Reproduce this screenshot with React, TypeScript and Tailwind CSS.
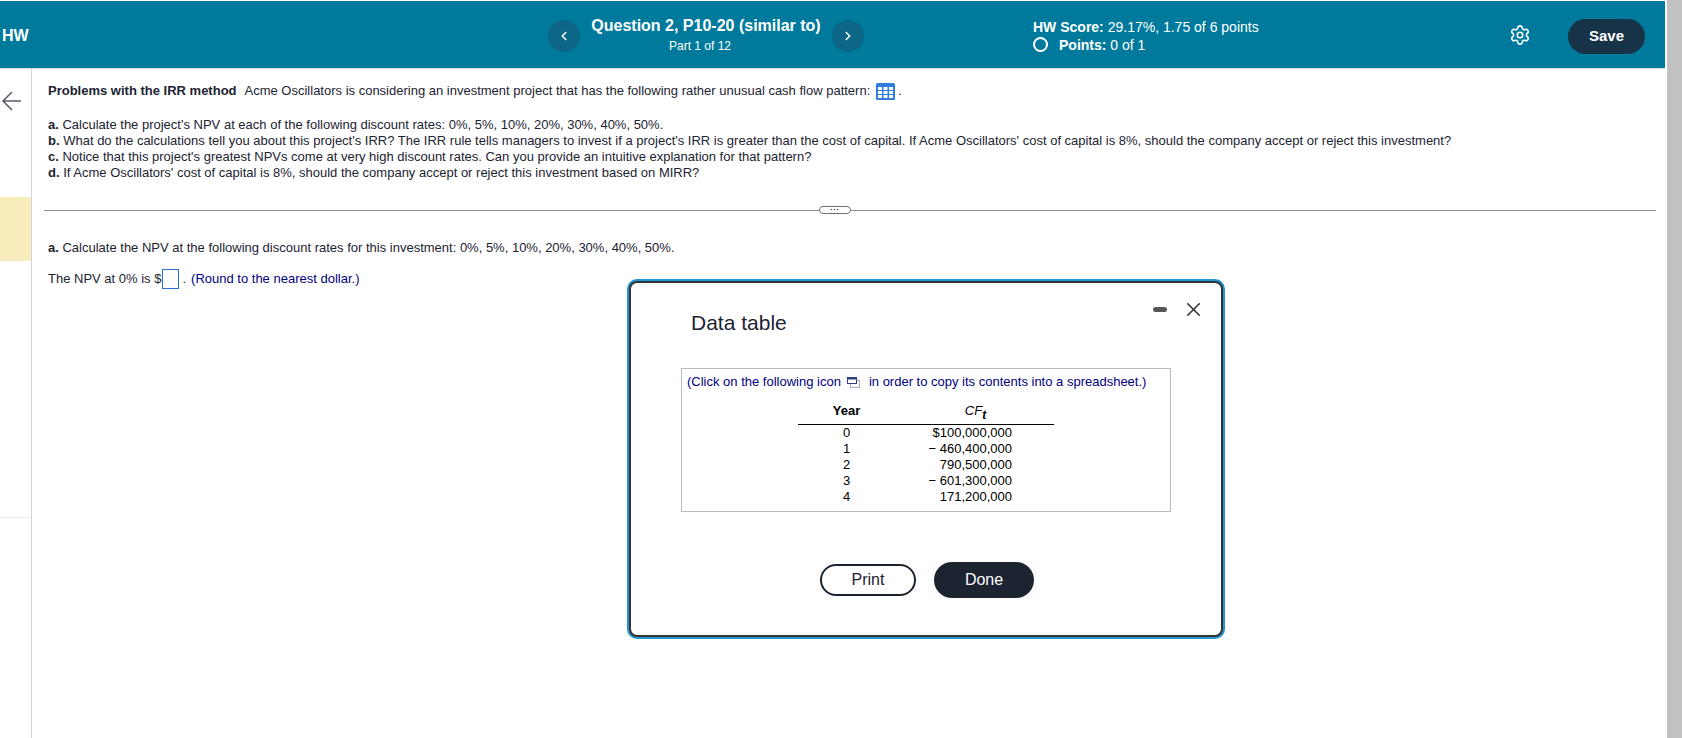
import { ChevronLeft, ChevronRight, Settings, X } from 'lucide-react'

const rows = [
  ['0', '$100,000,000'],
  ['1', '− 460,400,000'],
  ['2', '790,500,000'],
  ['3', '− 601,300,000'],
  ['4', '171,200,000'],
]

function TableIcon() {
  return (
    <svg width="19" height="17" viewBox="0 0 19 17" className="inline-block">
      <rect width="19" height="17" rx="1.500" fill="#2f7de1" />
      <g fill="white">
        <rect x="2" y="4" width="4" height="3" />
        <rect x="7.500" y="4" width="4" height="3" />
        <rect x="13" y="4" width="4" height="3" />
        <rect x="2" y="8" width="4" height="3" />
        <rect x="7.500" y="8" width="4" height="3" />
        <rect x="13" y="8" width="4" height="3" />
        <rect x="2" y="12" width="4" height="3" />
        <rect x="7.500" y="12" width="4" height="3" />
        <rect x="13" y="12" width="4" height="3" />
      </g>
    </svg>
  )
}

function CopyIcon() {
  return (
    <svg width="13" height="11" viewBox="0 0 13 11" className="inline-block">
      <rect x="3.500" y="3.500" width="9" height="7" fill="none" stroke="#a9acd6" />
      <rect x="0.500" y="0.500" width="9" height="6" fill="white" stroke="#2f3f7f" />
      <rect x="0.500" y="0.500" width="9" height="2" fill="#2f3f7f" />
    </svg>
  )
}

function DataTableDialog() {
  return (
    <div className="absolute left-[629px] top-[281px] flex h-[356px] w-[594px] flex-col rounded-lg border-2 border-[#333333] bg-white shadow-[0_0_0_2px_#2196d3]">
      <div className="flex h-[85px] items-start justify-between pl-[60px] pr-[16px]">
        <h2 className="pt-[26px] text-[21px] leading-[28px] text-[#1c2331]">Data table</h2>
        <div className="flex items-center gap-[15px] pt-[15px]">
          <div className="h-[5px] w-[14px] rounded-sm bg-[#555555]" />
          <X size={23} strokeWidth={1.6} className="text-[#333333]" />
        </div>
      </div>
      <div className="mx-[50px] h-[144px] w-[490px] border border-[#bbbbbb] pl-[5px] pt-[5px]">
        <p className="flex items-center text-[13px] leading-[16px] text-[#000080]">
          (Click on the following icon
          <span className="ml-[6px] mr-[9px] flex">
            <CopyIcon />
          </span>
          in order to copy its contents into a spreadsheet.)
        </p>
        <div className="ml-[111px] mt-[13px] w-[256px] text-[13px] text-black">
          <div className="flex h-[22px] items-start border-b border-black pb-[2px] leading-[16px]">
            <span className="w-[97px] text-center font-bold">Year</span>
            <span className="w-[117px] pl-[44px] text-center italic">
              CF<span className="relative top-[4px] text-[12px] font-bold">t</span>
            </span>
          </div>
          {rows.map(([year, amount]) => (
            <div key={year} className="flex h-[16px] items-center leading-[16px]">
              <span className="w-[97px] text-center">{year}</span>
              <span className="w-[117px] text-right">{amount}</span>
            </div>
          ))}
        </div>
      </div>
      <div className="mt-[50px] flex items-center pl-[189px]">
        <button className="h-[32px] w-[96px] rounded-full border-2 border-[#1c2331] text-[16px] text-[#1c2331]">Print</button>
        <button className="ml-[18px] h-[36px] w-[100px] rounded-full bg-[#1c2331] text-[16px] text-white">Done</button>
      </div>
    </div>
  )
}

export default function App() {
  return (
    <div className="relative flex h-[738px] w-[1682px] overflow-hidden bg-white font-['Liberation_Sans',Arial,sans-serif] text-[13px] text-[#1c2331]">
      <div className="flex w-[1665px] flex-col">
        <header className="mt-px flex h-[67px] items-center bg-[#007a9c] text-white">
          <div className="mt-[3px] w-[548px] pl-[2px] text-[16px] font-bold">HW</div>
          <button className="mt-[3px] flex h-[32px] w-[32px] items-center justify-center rounded-full bg-[#0b6785]">
            <ChevronLeft size={14} strokeWidth={2.500} />
          </button>
          <div className="ml-[11px] w-[230px] text-center">
            <div className="text-[16px] font-bold leading-[20px]">Question 2, P10-20 (similar to)</div>
            <div className="mt-[2px] pr-[12px] text-[12px] leading-[16px]">Part 1 of 12</div>
          </div>
          <button className="ml-[11px] mt-[3px] flex h-[32px] w-[32px] items-center justify-center rounded-full bg-[#0b6785]">
            <ChevronRight size={14} strokeWidth={2.500} />
          </button>
          <div className="ml-[169px] mt-[2px] w-[450px] text-[14px] leading-[18px]">
            <div>
              <b>HW Score:</b> 29.17%, 1.75 of 6 points
            </div>
            <div className="flex items-center">
              <span className="mr-[11px] h-[15px] w-[15px] rounded-full border-2 border-white" />
              <span>
                <b>Points:</b> 0 of 1
              </span>
            </div>
          </div>
          <div className="ml-[26px] flex w-[22px]">
            <Settings size={22} strokeWidth={1.7} />
          </div>
          <button className="ml-[37px] mt-[4px] h-[35px] w-[77px] rounded-full bg-[#163347] text-[15px] font-bold">Save</button>
        </header>

        <div className="flex flex-1 border-t border-[#d8dde3]">
          <aside className="flex w-[32px] shrink-0 flex-col border-r border-[#d0d3dc]">
            <svg width="22" height="22" viewBox="0 0 22 22" fill="none" stroke="#555b66" strokeWidth="1.500" className="ml-px mt-[21px]">
              <path d="M20 11H2M11 2l-9 9 9 9" />
            </svg>
            <div className="mt-[85px] h-[64px] bg-[#f8ecbc]" />
            <div className="mt-[256px] h-px bg-[#eeeeee]" />
          </aside>

          <main className="flex-1 pr-[9px] pl-[12px]">
            <div className="pl-[4px] pt-[13px]">
              <p className="flex h-[18px] items-center">
                <b className="mr-[8px]">Problems with the IRR method</b>
                Acme Oscillators is considering an investment project that has the following rather unusual cash flow pattern:
                <span className="ml-[6px] mr-[3px] flex">
                  <TableIcon />
                </span>
                .
              </p>
              <div className="mt-[17px] leading-[16px]">
                <p>
                  <b>a.</b> Calculate the project's NPV at each of the following discount rates: 0%, 5%, 10%, 20%, 30%, 40%, 50%.
                </p>
                <p>
                  <b>b.</b> What do the calculations tell you about this project's IRR? The IRR rule tells managers to invest if a project's IRR is greater than the cost of capital. If Acme Oscillators' cost of capital is 8%, should the company accept or reject this investment?
                </p>
                <p>
                  <b>c.</b> Notice that this project's greatest NPVs come at very high discount rates. Can you provide an intuitive explanation for that pattern?
                </p>
                <p>
                  <b>d.</b> If Acme Oscillators' cost of capital is 8%, should the company accept or reject this investment based on MIRR?
                </p>
              </div>
            </div>
            <div className="mt-[25px] flex items-center">
              <div className="h-px w-[775px] bg-[#8a8fa3]" />
              <div className="flex h-[8px] w-[32px] items-center justify-center rounded-[4px] border border-[#6b7280] text-[8px] font-bold leading-none tracking-[1px]">
                <span className="-mt-[4px]">...</span>
              </div>
              <div className="h-px flex-1 bg-[#8a8fa3]" />
            </div>
            <div className="pl-[4px] pt-[26px]">
              <p className="leading-[16px]">
                <b>a.</b> Calculate the NPV at the following discount rates for this investment: 0%, 5%, 10%, 20%, 30%, 40%, 50%.
              </p>
              <div className="mt-[13px] flex h-[20px] items-center">
                The NPV at 0% is $
                <span className="ml-px h-[20px] w-[17px] border border-[#2a6fdb]" />
                <span className="ml-[3px]">.</span>
                <span className="ml-[5px] text-[#000080]">(Round to the nearest dollar.)</span>
              </div>
            </div>
          </main>
        </div>
      </div>
      <div className="ml-[2px] w-[15px] bg-[#c1c1c1]" />
      <DataTableDialog />
    </div>
  )
}
